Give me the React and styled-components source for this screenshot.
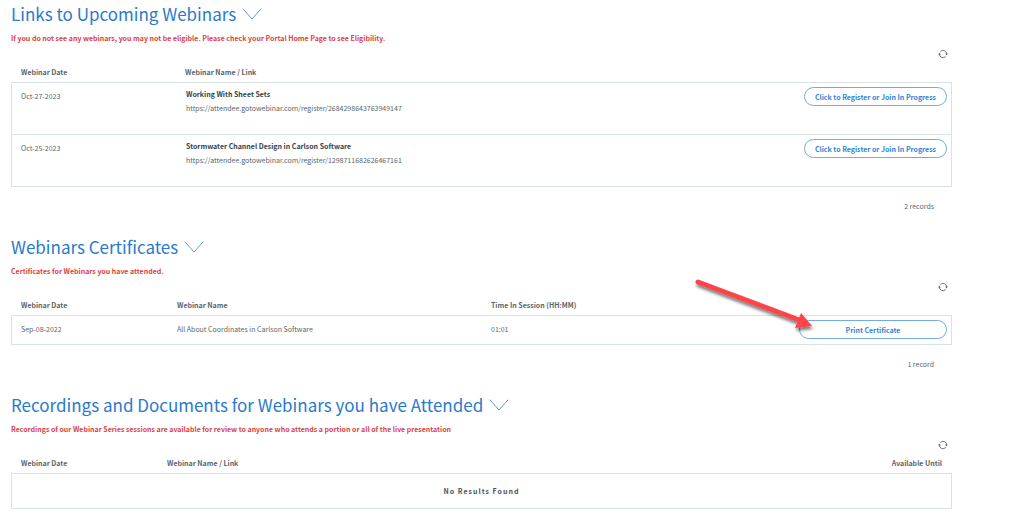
import React from "react";
import styled, { createGlobalStyle } from "styled-components";

const GlobalStyle = createGlobalStyle`
  * { box-sizing: border-box; }
  body {
    margin: 0;
    background: #fff;
    color: #59666c;
    font: 400 7px/14px "Noto Sans CJK SC", "Noto Sans", sans-serif;
  }
`;

const Page = styled.main`
  padding: 0 72px 0 11px;
`;

const Section = styled.section`
  display: flex;
  flex-direction: column;
`;

const HeadingRow = styled.div`
  display: flex;
  align-items: center;
  gap: 6px;
  height: 28px;
`;

const Heading = styled.h2`
  margin: 0;
  color: #2a7acb;
  font-size: 17px;
  font-weight: 400;
  line-height: 28px;
`;

const IconButton = styled.button`
  display: flex;
  padding: 0;
  border: 0;
  background: none;
  color: ${(p) => p.$color};
  cursor: pointer;
`;

const Note = styled.p`
  margin: 2px 0 0;
  color: #dc3f45;
  font-weight: 700;
  line-height: 16px;
`;

const Toolbar = styled.div`
  display: flex;
  justify-content: flex-end;
  align-items: center;
  height: 16px;
  padding-right: 4px;
`;

const Table = styled.table`
  width: 100%;
  table-layout: fixed;
  border-collapse: separate;
  border-spacing: 0;
`;

const Col = styled.col`
  width: ${(p) => p.$width || "auto"};
`;

const HeaderCell = styled.th`
  height: 21px;
  padding: 0 10px;
  border-bottom: 1px solid #d9e2e5;
  font-weight: 700;
  line-height: 18px;
  text-align: ${(p) => p.$align || "left"};
  white-space: nowrap;
`;

const Cell = styled.td`
  position: relative;
  height: ${(p) => p.$height};
  padding: ${(p) => p.$padding || "6px 10px 0"};
  border-bottom: 1px solid #d9e2e5;
  text-align: ${(p) => p.$align || "left"};
  vertical-align: top;

  &:first-child { border-left: 1px solid #d9e2e5; }
  &:last-child { border-right: 1px solid #d9e2e5; }
`;

const WebinarName = styled.strong`
  display: block;
  color: #36444d;
`;

const WebinarLink = styled.a`
  color: inherit;
  text-decoration: none;
`;

const PillButton = styled.button`
  width: ${(p) => p.$width};
  height: 19px;
  padding: 0;
  border: 1px solid #6eace5;
  border-radius: 10px;
  background: #fff;
  color: #2f86d8;
  font: inherit;
  font-weight: 700;
  vertical-align: top;
  white-space: nowrap;
  cursor: pointer;
`;

const EmptyCell = styled(Cell)`
  color: #46535b;
  font-weight: 700;
  letter-spacing: 1px;
  vertical-align: middle;
`;

const Footer = styled.div`
  padding: 11px 18px 19px 0;
  line-height: 16px;
  text-align: right;
`;

const Arrow = styled.svg`
  position: absolute;
  right: 135px;
  top: -40px;
  pointer-events: none;
`;

function Chevron() {
  return (
    <svg width="20" height="12" viewBox="0 0 20 12" fill="none" stroke="currentColor" aria-hidden="true">
      <path d="M.8.7 10 11 19.2.7" />
    </svg>
  );
}

function Refresh() {
  return (
    <svg width="10" height="10" viewBox="0 0 10 10" fill="none" stroke="currentColor" aria-hidden="true">
      <path d="M2.3 2.5A3.7 3.7 0 0 1 8.7 5M7.7 7.5A3.7 3.7 0 0 1 1.3 5" />
      <path d="M7 4.4h3L8.6 6.6zM0 5.6h3L1.4 3.4z" fill="currentColor" stroke="none" />
    </svg>
  );
}

function PointerArrow() {
  return (
    <Arrow width="124" height="58" viewBox="0 0 124 58" aria-hidden="true">
      <defs>
        <filter id="arrow-shadow" x="-10%" y="-10%" width="125%" height="140%">
          <feDropShadow dx="1" dy="3" stdDeviation="1.5" floodColor="#000" floodOpacity="0.5" />
        </filter>
      </defs>
      <g filter="url(#arrow-shadow)" fill="#fb4548">
        <path d="M6 6 106 43.5" stroke="#fb4548" strokeWidth="5" strokeLinecap="round" />
        <path d="M109 37 120 50 103 52Z" />
      </g>
    </Arrow>
  );
}

function WebinarSection({ title, note, children }) {
  return (
    <Section>
      <HeadingRow>
        <Heading>{title}</Heading>
        <IconButton $color="#5b99d8" aria-label={`Collapse ${title}`}><Chevron /></IconButton>
      </HeadingRow>
      <Note>{note}</Note>
      <Toolbar>
        <IconButton $color="#6c787e" aria-label={`Refresh ${title}`}><Refresh /></IconButton>
      </Toolbar>
      {children}
    </Section>
  );
}

const upcoming = [
  { date: "Oct-27-2023", name: "Working With Sheet Sets", url: "https://attendee.gotowebinar.com/register/2684298643763949147" },
  { date: "Oct-25-2023", name: "Stormwater Channel Design in Carlson Software", url: "https://attendee.gotowebinar.com/register/1298711682626467161" },
];

export default function App() {
  return (
    <Page>
      <GlobalStyle />
      <WebinarSection
        title="Links to Upcoming Webinars"
        note="If you do not see any webinars, you may not be eligible. Please check your Portal Home Page to see Eligibility."
      >
        <Table>
          <colgroup><Col $width="164px" /><Col /><Col $width="160px" /></colgroup>
          <thead>
            <tr>
              <HeaderCell>Webinar Date</HeaderCell>
              <HeaderCell>Webinar Name / Link</HeaderCell>
              <HeaderCell />
            </tr>
          </thead>
          <tbody>
            {upcoming.map((w) => (
              <tr key={w.date}>
                <Cell $height="52px" $padding="6px 9px 0">{w.date}</Cell>
                <Cell $height="52px" $padding="4px 11px 0">
                  <WebinarName>{w.name}</WebinarName>
                  <WebinarLink href={w.url}>{w.url}</WebinarLink>
                </Cell>
                <Cell $height="52px" $padding="4px 4px 0" $align="right">
                  <PillButton $width="143px">Click to Register or Join In Progress</PillButton>
                </Cell>
              </tr>
            ))}
          </tbody>
        </Table>
        <Footer>2 records</Footer>
      </WebinarSection>

      <WebinarSection title="Webinars Certificates" note="Certificates for Webinars you have attended.">
        <Table>
          <colgroup><Col $width="156px" /><Col $width="314px" /><Col /><Col $width="160px" /></colgroup>
          <thead>
            <tr>
              <HeaderCell>Webinar Date</HeaderCell>
              <HeaderCell>Webinar Name</HeaderCell>
              <HeaderCell>Time In Session (HH:MM)</HeaderCell>
              <HeaderCell />
            </tr>
          </thead>
          <tbody>
            <tr>
              <Cell $height="29px" $padding="6px 9px 0">Sep-08-2022</Cell>
              <Cell $height="29px">All About Coordinates in Carlson Software</Cell>
              <Cell $height="29px">01:01</Cell>
              <Cell $height="29px" $padding="4px 4px 0" $align="right">
                <PillButton $width="148px">Print Certificate</PillButton>
                <PointerArrow />
              </Cell>
            </tr>
          </tbody>
        </Table>
        <Footer>1 record</Footer>
      </WebinarSection>

      <WebinarSection
        title="Recordings and Documents for Webinars you have Attended"
        note="Recordings of our Webinar Series sessions are available for review to anyone who attends a portion or all of the live presentation"
      >
        <Table>
          <colgroup><Col $width="146px" /><Col /><Col $width="160px" /></colgroup>
          <thead>
            <tr>
              <HeaderCell>Webinar Date</HeaderCell>
              <HeaderCell>Webinar Name / Link</HeaderCell>
              <HeaderCell $align="right">Available Until</HeaderCell>
            </tr>
          </thead>
          <tbody>
            <tr>
              <EmptyCell colSpan={3} $height="35px" $padding="0" $align="center">No Results Found</EmptyCell>
            </tr>
          </tbody>
        </Table>
      </WebinarSection>
    </Page>
  );
}
